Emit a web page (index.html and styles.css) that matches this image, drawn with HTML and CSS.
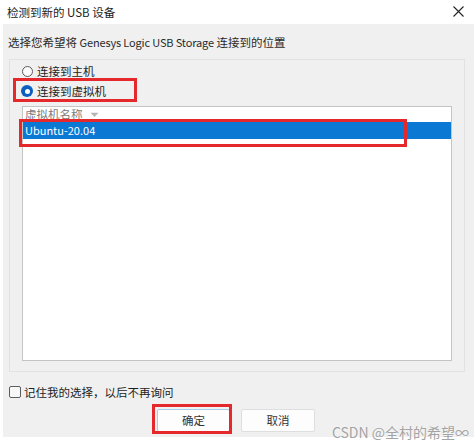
FILE: index.html
```html
<!DOCTYPE html>
<html lang="zh-CN">
<head>
<meta charset="utf-8">
<title>检测到新的 USB 设备</title>
<link rel="stylesheet" href="styles.css">
</head>
<body>
<div class="page">
  <div class="titlebar">
    <span class="title">检测到新的 USB 设备</span>
    <svg class="close" width="11" height="11" viewBox="0 0 11 11"><path d="M0.5 0.5 L10.5 10.5 M10.5 0.5 L0.5 10.5" stroke="#222" stroke-width="1.1" fill="none"/></svg>
  </div>
  <div class="dialog">
    <div class="prompt">选择您希望将 <span class="latin">Genesys Logic USB Storage</span> 连接到的位置</div>
    <div class="group">
      <div class="option first">
        <span class="radio"></span>
        <span class="label">连接到主机</span>
      </div>
      <div class="option">
        <span class="radio checked"></span>
        <span class="label">连接到虚拟机</span>
      </div>
      <div class="listbox">
        <div class="listhead">
          <span class="colname">虚拟机名称</span>
          <svg class="sortarrow" width="9" height="6" viewBox="0 0 9 6"><path d="M0.5 0.8 L4.5 5 L8.5 0.8 Z" fill="#b5b5b5"/></svg>
        </div>
        <div class="listrow selected">Ubuntu-20.04</div>
      </div>
    </div>
    <div class="remember">
      <span class="checkbox"></span>
      <span class="label">记住我的选择，以后不再询问</span>
    </div>
    <div class="buttons">
      <button class="btn primary">确定</button>
      <button class="btn">取消</button>
    </div>
  </div>
  <div class="mark mark-radio"></div>
  <div class="mark mark-row"></div>
  <div class="mark mark-ok"></div>
  <div class="watermark">CSDN @全村的希望∞</div>
</div>
</body>
</html>
```

FILE: styles.css
```css
* { box-sizing: border-box; }

html, body {
  margin: 0;
  padding: 0;
  background: #ffffff;
}

body {
  font-family: "Noto Sans CJK SC", "Noto Sans", sans-serif;
  color: #222;
}

.page {
  position: relative;
  width: 474px;
  height: 444px;
  overflow: hidden;
  background: #ffffff;
}

.titlebar {
  height: 24px;
  display: flex;
  align-items: center;
  justify-content: space-between;
  padding: 0 10px 0 7px;
  background: #ffffff;
}

.title {
  font-size: 11.5px;
  line-height: 16px;
  color: #1b1b1b;
}

.close {
  display: block;
  margin-top: -2px;
}

.dialog {
  margin-left: 3px;
  height: 413px;
  background: #f0f0f0;
  display: flex;
  flex-direction: column;
  align-items: flex-start;
}

.prompt {
  margin: 10px 0 0 5px;
  font-size: 11.5px;
  line-height: 16px;
  color: #2a2a2a;
}

.latin {
  font-size: 11px;
  letter-spacing: -0.15px;
}

.group {
  margin: 9px 0 0 6px;
  width: 456px;
  height: 313px;
  border: 1px solid #e2e2e2;
  background: #f0f0f0;
  display: flex;
  flex-direction: column;
  align-items: flex-start;
  padding-top: 3px;
}

.option {
  display: flex;
  align-items: center;
  gap: 4px;
  height: 16px;
  margin-left: 12px;
}

.option + .option {
  margin-top: 4px;
}

.label {
  font-size: 11.5px;
  line-height: 16px;
  color: #1e1e1e;
}

.radio {
  width: 11px;
  height: 11px;
  border-radius: 50%;
  border: 1px solid #5a5a5a;
  background: #fbfbfb;
  display: flex;
  align-items: center;
  justify-content: center;
}

.radio.checked {
  width: 12px;
  height: 12px;
  margin-left: -1px;
  border: none;
  background: #0a5fc0;
}

.radio.checked::after {
  content: "";
  width: 5px;
  height: 5px;
  border-radius: 50%;
  background: #ffffff;
}

.listbox {
  margin: 7px 0 0 12px;
  width: 430px;
  height: 255px;
  border: 1px solid #c4c4c4;
  background: #ffffff;
  display: flex;
  flex-direction: column;
}

.listhead {
  height: 15px;
  display: flex;
  align-items: center;
  gap: 7px;
  padding-left: 2px;
}

.colname {
  font-size: 11.5px;
  line-height: 15px;
  color: #7a7a7a;
}

.sortarrow {
  display: block;
}

.listrow {
  height: 17px;
  padding-left: 2px;
  font-size: 11px;
  line-height: 17px;
  color: #222;
}

.listrow.selected {
  background: #0b78d4;
  color: #ffffff;
}

.remember {
  margin: 12px 0 0 6px;
  display: flex;
  align-items: center;
  gap: 3px;
  height: 16px;
}

.checkbox {
  width: 12px;
  height: 12px;
  border: 1px solid #5c5c5c;
  border-radius: 2px;
  background: #f8f8f8;
}

.buttons {
  margin: 9px 0 0 154px;
  display: flex;
  gap: 11px;
}

.btn {
  width: 73px;
  height: 23px;
  padding: 0;
  margin: 0;
  font-family: "Noto Sans CJK SC", "Noto Sans", sans-serif;
  font-size: 11.5px;
  line-height: 21px;
  color: #333;
  background: #fdfdfd;
  border: 1px solid #dedede;
  border-radius: 2px;
}

.btn.primary {
  border-color: #a9cde8;
}

.btn + .btn {
  width: 74px;
}

.mark {
  position: absolute;
  border: 3px solid #e4282c;
}

.mark-radio {
  left: 13px;
  top: 78px;
  width: 124px;
  height: 24px;
}

.mark-row {
  left: 19px;
  top: 119px;
  width: 388px;
  height: 28px;
}

.mark-ok {
  left: 152px;
  top: 404px;
  width: 80px;
  height: 30px;
}

.watermark {
  position: absolute;
  right: 5px;
  top: 423px;
  font-size: 14px;
  line-height: 18px;
  color: #a3a3a3;
  text-shadow: 0 0 2px #ffffff;
  white-space: nowrap;
}
```
